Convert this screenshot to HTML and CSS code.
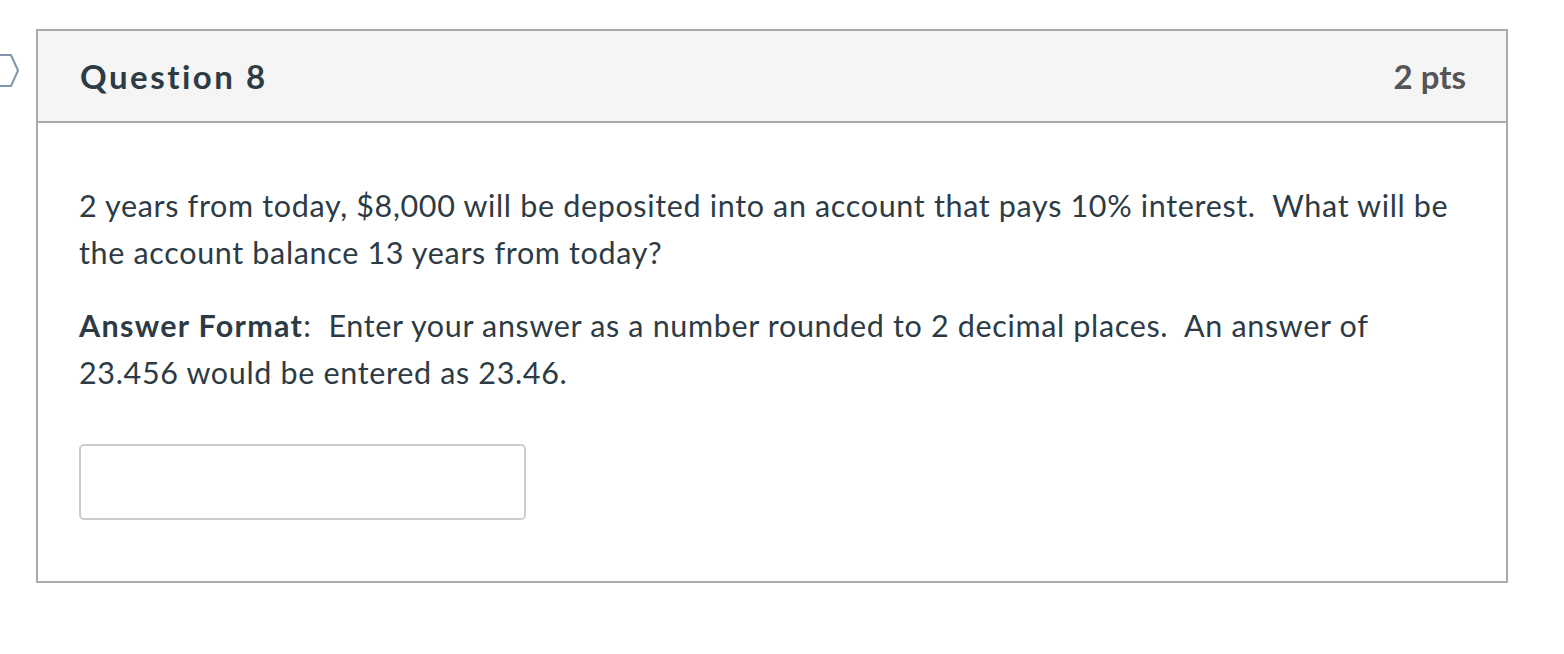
FILE: index.html
```html
<!DOCTYPE html>
<html>
<head>
<meta charset="utf-8">
<link rel="stylesheet" href="styles.css">
</head>
<body>
<div class="page">
  <svg class="flag" width="20" height="40" viewBox="0 0 20 40">
    <path d="M-6 4 H11 L18 19.5 L11 35 H-6" fill="none" stroke="#7f95ab" stroke-width="2" stroke-linejoin="round"/>
  </svg>
  <div class="card">
    <div class="header">
      <div class="title">Question 8</div>
      <div class="pts">2 pts</div>
    </div>
    <div class="content">
      <p>2 years from today, $8,000 will be deposited into an account that pays 10% interest.&nbsp; What will be the account balance 13 years from today?</p>
      <p><strong>Answer Format</strong>:&nbsp; Enter your answer as a number rounded to 2 decimal places.&nbsp; An answer of 23.456 would be entered as 23.46.</p>
      <input class="answer" type="text">
    </div>
  </div>
</div>
</body>
</html>
```
FILE: styles.css
```css
html, body {
  margin: 0;
  padding: 0;
  background: #fff;
}
body {
  font-family: Lato, "Open Sans", sans-serif;
  color: #2d3b45;
}
.page {
  position: relative;
  padding: 29px 0 0 36px;
}
.flag {
  position: absolute;
  left: 0;
  top: 51px;
}
.card {
  width: 1468px;
  border: 2px solid #aaaaaa;
}
.header {
  display: flex;
  justify-content: space-between;
  align-items: center;
  height: 90px;
  padding: 0 40px 0 42px;
  background: #f5f5f5;
  border-bottom: 2px solid #aaaaaa;
}
.title {
  font-size: 33px;
  font-weight: 700;
  letter-spacing: 2.5px;
  color: #2d3b45;
}
.pts {
  font-size: 33px;
  font-weight: 700;
  color: #555;
}
.content {
  padding: 59px 50px 61px 41px;
  font-size: 30.5px;
  line-height: 47px;
  letter-spacing: 0.66px;
}
.content p {
  margin: 0 0 26px 0;
}
.content strong {
  letter-spacing: 1.3px;
}
.answer {
  display: block;
  margin-top: 48px;
  width: 447px;
  height: 76px;
  box-sizing: border-box;
  border: 2px solid #cccccc;
  border-radius: 5px;
  background: #fff;
}
```
